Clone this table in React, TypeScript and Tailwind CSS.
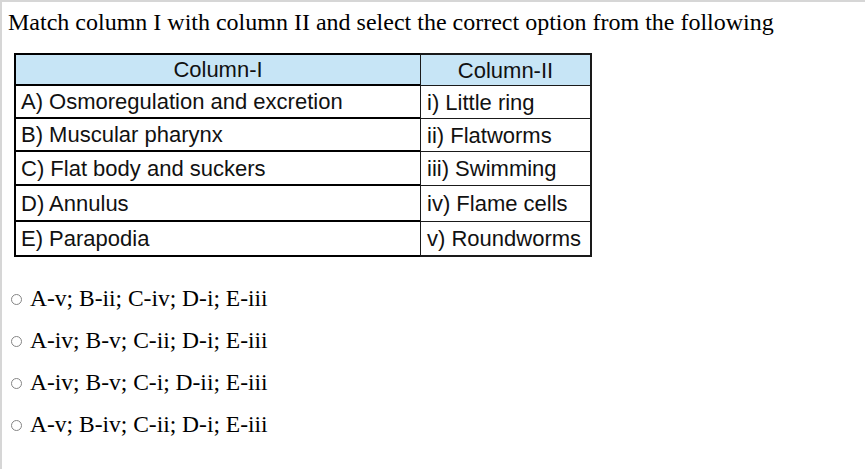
const LEFT = [
  'A) Osmoregulation and excretion',
  'B) Muscular pharynx',
  'C) Flat body and suckers',
  'D) Annulus',
  'E) Parapodia',
]

const RIGHT = ['i) Little ring', 'ii) Flatworms', 'iii) Swimming', 'iv) Flame cells', 'v) Roundworms']

// row heights in px, header first
const ROW_H = ['h-[33px]', 'h-[33px]', 'h-[33px]', 'h-[34px]', 'h-[36px]', 'h-[35px]']

const OPTIONS = [
  'A-v; B-ii; C-iv; D-i; E-iii',
  'A-iv; B-v; C-ii; D-i; E-iii',
  'A-iv; B-v; C-i; D-ii; E-iii',
  'A-v; B-iv; C-ii; D-i; E-iii',
]

export default function App() {
  return (
    <div className="w-[865px] h-[469px] bg-white border-t-2 border-l-2 border-[#d6d6d6] overflow-hidden">
      <h1 className="pl-[6px] pt-[6px] text-[24px] leading-[28px] text-black font-['Liberation_Serif','Times_New_Roman',serif] whitespace-nowrap">
        Match column I with column II and select the correct option from the following
      </h1>

      <div className="ml-[12px] mt-[17px] grid grid-cols-[406px_172px] font-['Liberation_Sans',Arial,sans-serif] text-[22px] text-[#111]">
        <div className={`${ROW_H[0]} flex items-center justify-center bg-[#c7e5f6] border-2 border-r-0 border-black`}>
          Column-I
        </div>
        <div className={`${ROW_H[0]} flex items-center justify-center bg-[#c7e5f6] border-2 border-l-[1px] border-b-[1px] border-[#1a1a1a]`}>
          Column-II
        </div>
        {LEFT.map((text, i) => (
          <Row key={text} left={text} right={RIGHT[i]} h={ROW_H[i + 1]} last={i === LEFT.length - 1} />
        ))}
      </div>

      <div className="mt-[21px] font-['Liberation_Serif','Times_New_Roman',serif] text-[23.5px] text-black">
        {OPTIONS.map((opt) => (
          <label key={opt} className="h-[42px] flex items-center gap-[8px] pl-[9px]">
            <span className="w-[11px] h-[11px] rounded-full border border-[#858585] bg-white shrink-0" />
            <span className="whitespace-nowrap">{opt}</span>
          </label>
        ))}
      </div>
    </div>
  )
}

function Row({ left, right, h, last }: { left: string; right: string; h: string; last: boolean }) {
  return (
    <>
      <div className={`${h} flex items-center pl-[5px] border-l-2 border-b-2 border-black whitespace-nowrap`}>{left}</div>
      <div
        className={`${h} flex items-center pl-[6px] border-l-[1px] border-r-2 border-[#1a1a1a] whitespace-nowrap ${
          last ? 'border-b-2' : 'border-b-[1px]'
        }`}
      >
        {right}
      </div>
    </>
  )
}
